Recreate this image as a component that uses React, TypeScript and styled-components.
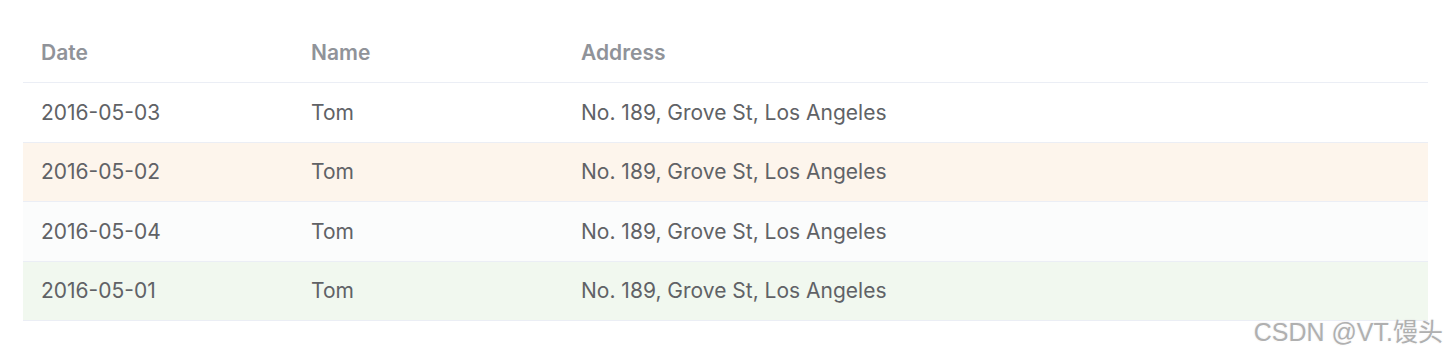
import styled, { createGlobalStyle } from 'styled-components';

const GlobalStyle = createGlobalStyle`
  html, body {
    margin: 0;
    padding: 0;
    background: #fff;
  }
  body {
    width: 1447px;
    height: 357px;
    overflow: hidden;
    font-family: Inter, "Noto Sans", sans-serif;
  }
`;

const Page = styled.div`
  position: relative;
  height: 357px;
  padding: 23px 19px 0 23px;
  box-sizing: border-box;
`;

const Table = styled.div`
  width: 1405px;
  font-size: 21px;
  color: #606266;
`;

type Tone = 'plain' | 'warning' | 'muted' | 'success';

const toneBg: Record<Tone, string> = {
  plain: '#ffffff',
  warning: '#fdf5ec',
  muted: '#fbfcfc',
  success: '#f1f8ef',
};

const Row = styled.div<{ $tone?: Tone }>`
  display: grid;
  grid-template-columns: 270px 270px 1fr;
  height: 59.5px;
  box-sizing: border-box;
  border-bottom: 1px solid #ebeef5;
  background: ${(p) => toneBg[p.$tone ?? 'plain']};
`;

const HeadRow = styled(Row)`
  height: 60px;
  color: #909399;
  font-weight: 600;
`;

const Cell = styled.div`
  display: flex;
  align-items: center;
  padding: 0 18px;
  white-space: nowrap;
`;

const Watermark = styled.div`
  position: absolute;
  right: 4px;
  bottom: 9px;
  font-family: "Liberation Sans", "Noto Sans CJK SC", sans-serif;
  font-size: 25px;
  color: #b0b0b0;
  text-shadow: 1px 1px 1px #fff, 0 0 2px #dcdcdc;
`;

const rows: { date: string; tone: Tone }[] = [
  { date: '2016-05-03', tone: 'plain' },
  { date: '2016-05-02', tone: 'warning' },
  { date: '2016-05-04', tone: 'muted' },
  { date: '2016-05-01', tone: 'success' },
];

export default function App() {
  return (
    <>
      <GlobalStyle />
      <Page>
        <Table>
          <HeadRow>
            <Cell>Date</Cell>
            <Cell>Name</Cell>
            <Cell>Address</Cell>
          </HeadRow>
          {rows.map((r) => (
            <Row key={r.date} $tone={r.tone}>
              <Cell>{r.date}</Cell>
              <Cell>Tom</Cell>
              <Cell>No. 189, Grove St, Los Angeles</Cell>
            </Row>
          ))}
        </Table>
        <Watermark>CSDN @VT.馒头</Watermark>
      </Page>
    </>
  );
}
